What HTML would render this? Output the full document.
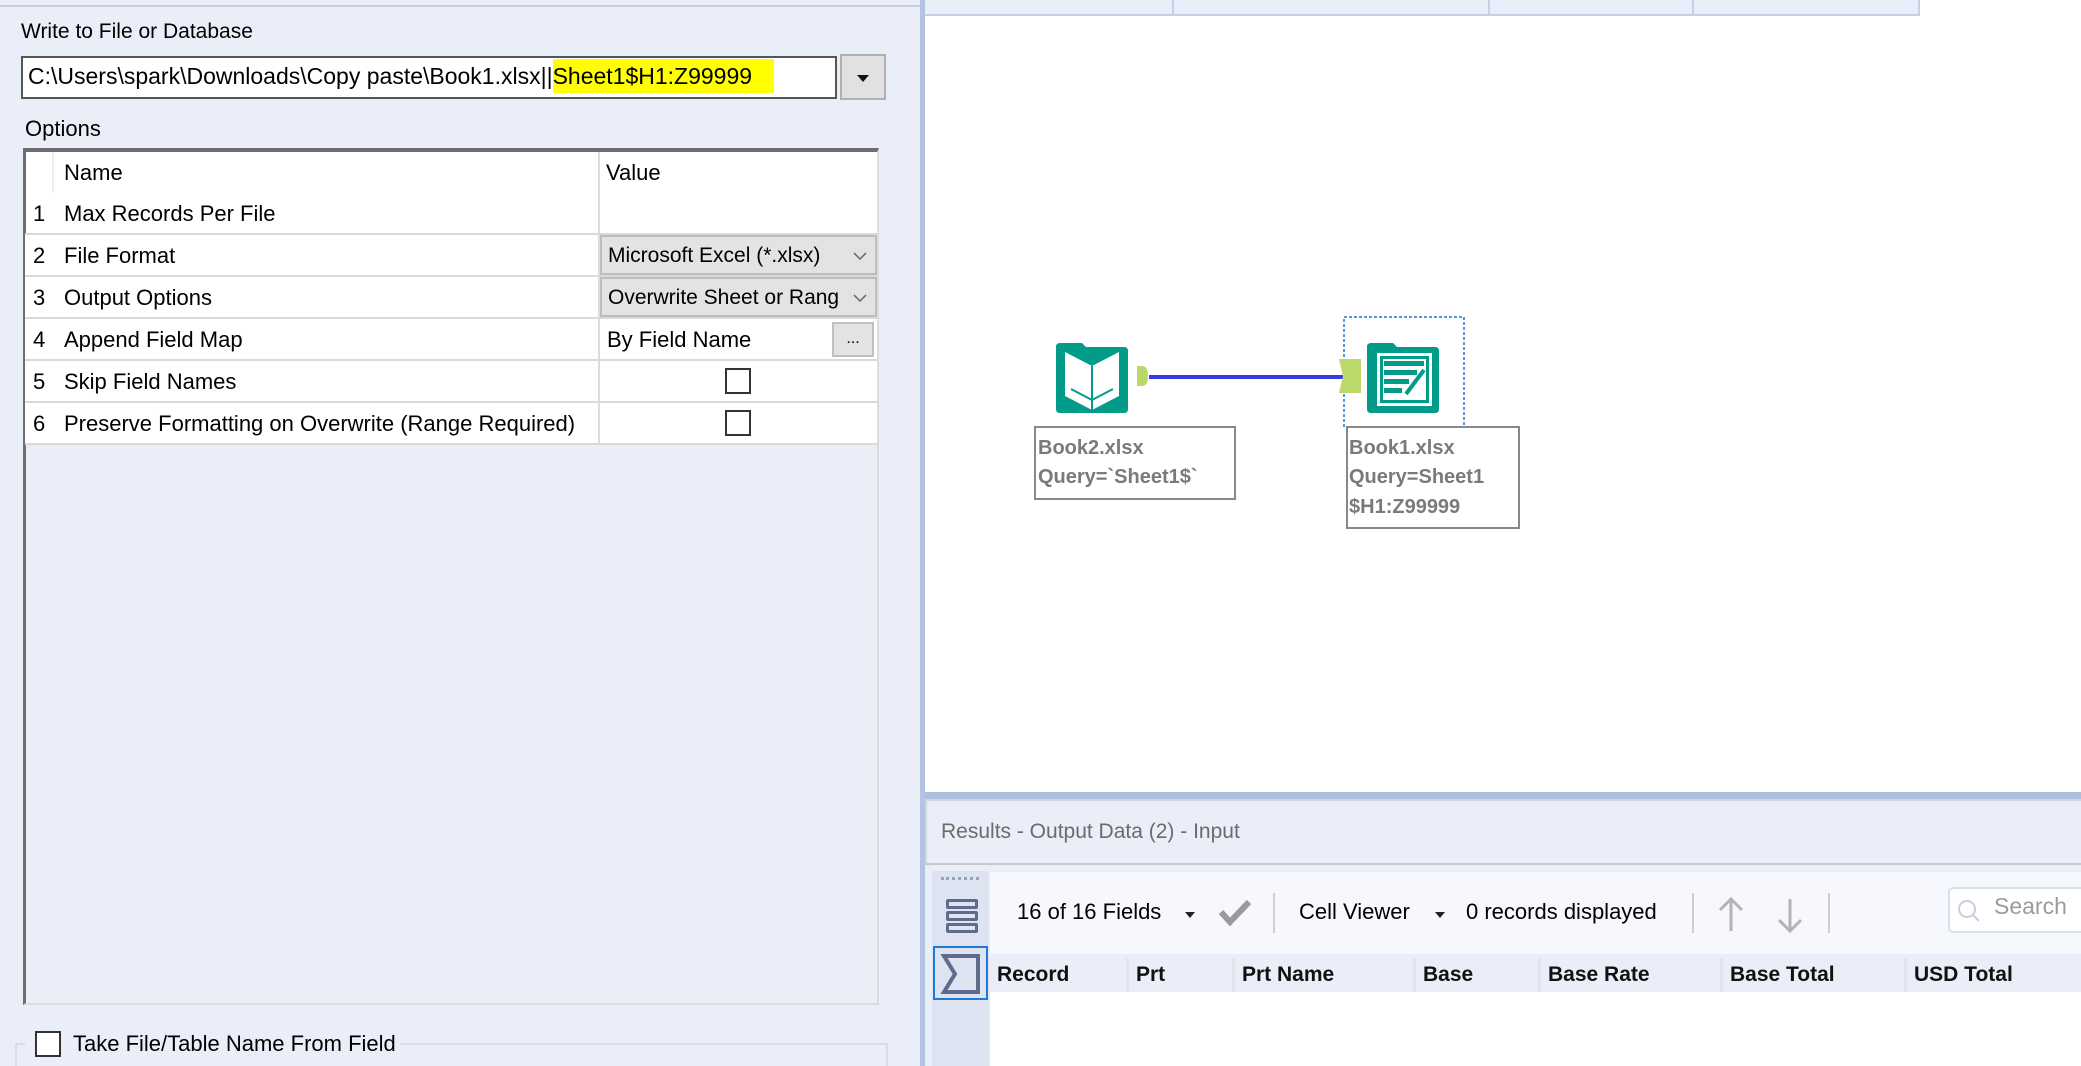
<!DOCTYPE html>
<html><head><meta charset="utf-8"><style>
*{margin:0;padding:0;box-sizing:border-box}
html,body{width:2081px;height:1066px;overflow:hidden}
body{position:relative;background:#fff;font-family:"Liberation Sans",Arial,sans-serif;color:#000}
.a{position:absolute}
.t{position:absolute;font-size:22px;line-height:26px;white-space:nowrap}
.row{position:absolute;left:25px;width:852px;height:42px;border-bottom:2px solid #d9d9d9;background:#fff}
.num{position:absolute;left:8px;top:8px;font-size:22px}
.nm{position:absolute;left:39px;top:8px;font-size:22px;white-space:nowrap}
.vc{position:absolute;left:573px;top:0;width:2px;height:42px;background:#dcdcdc}
.dd{position:absolute;left:575px;top:0;width:277px;height:40px;background:#e3e3e3;border:2px solid #bdbdbd}
.cb{position:absolute;width:26px;height:26px;border:2px solid #333;background:#fff}
.ch{position:absolute;top:958px;height:34px;background:#e9eef8;border-right:3px solid #dfe4ee;font-weight:bold;font-size:21px;line-height:34px;padding-left:7px;color:#111}
</style></head><body>
<div class="a" style="left:0;top:0;width:920px;height:1066px;background:#eaeef8"></div>
<div class="a" style="left:0;top:5px;width:920px;height:2px;background:#c9cfda"></div>
<div class="t" style="left:21px;top:19px;font-size:21px">Write to File or Database</div>
<div class="a" style="left:21px;top:56px;width:816px;height:43px;background:#fff;border:2px solid #555"></div>
<div class="t" style="left:28px;top:63px;font-size:23px">C:\Users\spark\Downloads\Copy paste\Book1.xlsx||<span style="background:#ffff00;padding:4px 22px 4px 0">Sheet1$H1:Z99999</span></div>
<div class="a" style="left:840px;top:54px;width:46px;height:46px;background:#e1e1e1;border:2px solid #b0b0b0"></div>
<div class="a" style="left:857px;top:75px;width:0;height:0;border-left:6px solid transparent;border-right:6px solid transparent;border-top:7px solid #111"></div>
<div class="t" style="left:25px;top:116px">Options</div>
<div class="a" style="left:23px;top:148px;width:856px;height:857px;border:2px solid #dcdcdc;border-top:4px solid #6e6e6e;border-left:3px solid #6e6e6e;background:#eaeef8"></div>
<div class="a" style="left:26px;top:152px;width:851px;height:82px;background:#fff"></div>
<div class="a" style="left:52px;top:152px;width:2px;height:41px;background:#eeeeee"></div>
<div class="a" style="left:598px;top:152px;width:2px;height:82px;background:#dcdcdc"></div>
<div class="t" style="left:64px;top:160px">Name</div>
<div class="t" style="left:606px;top:160px">Value</div>
<div class="row" style="top:193px;background:transparent"><span class="num">1</span><span class="nm">Max Records Per File</span></div>
<div class="row" style="top:235px"><span class="num">2</span><span class="nm">File Format</span><div class="vc"></div><div class="dd"><span class="t" style="left:6px;top:6px;font-size:21px">Microsoft Excel (*.xlsx)</span><svg class="a" style="left:251px;top:14px" width="14" height="10"><path d="M1 2l6 6 6-6" fill="none" stroke="#666" stroke-width="1.5"/></svg></div></div>
<div class="row" style="top:277px"><span class="num">3</span><span class="nm">Output Options</span><div class="vc"></div><div class="dd"><span class="t" style="left:6px;top:6px;font-size:21px">Overwrite Sheet or Rang</span><svg class="a" style="left:251px;top:14px" width="14" height="10"><path d="M1 2l6 6 6-6" fill="none" stroke="#666" stroke-width="1.5"/></svg></div></div>
<div class="row" style="top:319px"><span class="num">4</span><span class="nm">Append Field Map</span><div class="vc"></div><span class="t" style="left:582px;top:8px">By Field Name</span><div class="a" style="left:807px;top:3px;width:42px;height:35px;background:#e3e3e3;border:2px solid #c0c0c0;font-size:16px;text-align:center;line-height:30px">...</div></div>
<div class="row" style="top:361px"><span class="num">5</span><span class="nm">Skip Field Names</span><div class="vc"></div><div class="cb" style="left:700px;top:7px"></div></div>
<div class="row" style="top:403px"><span class="num">6</span><span class="nm">Preserve Formatting on Overwrite (Range Required)</span><div class="vc"></div><div class="cb" style="left:700px;top:7px"></div></div>
<div class="a" style="left:15px;top:1043px;width:873px;height:40px;border:2px solid #d8dce4"></div>
<div class="a" style="left:25px;top:1030px;width:375px;height:30px;background:#eaeef8"></div>
<div class="cb" style="left:35px;top:1031px"></div>
<div class="t" style="left:73px;top:1031px">Take File/Table Name From Field</div>
<div class="a" style="left:920px;top:0;width:5px;height:1066px;background:#b4c4e0"></div>
<div class="a" style="left:925px;top:0;width:995px;height:16px;background:#e9eef8;border-bottom:2px solid #c5d0e6;border-right:2px solid #c5d0e6"></div>
<div class="a" style="left:1172px;top:0;width:2px;height:16px;background:#c5d0e6"></div>
<div class="a" style="left:1488px;top:0;width:2px;height:16px;background:#c5d0e6"></div>
<div class="a" style="left:1692px;top:0;width:2px;height:16px;background:#c5d0e6"></div>
<svg class="a" style="left:1020px;top:310px" width="520" height="230" viewBox="1020 310 520 230">
 <line x1="1149" y1="377" x2="1345" y2="377" stroke="#3b3be6" stroke-width="4"/>
 <rect x="1344" y="317" width="120" height="110" fill="none" stroke="#1a73d9" stroke-width="1.5" stroke-dasharray="3,2"/>
 <path d="M1060 343h22l4 4h38q4 0 4 4v58q0 4-4 4h-64q-4 0-4-4v-62q0-4 4-4z" fill="#009b89"/>
 <path d="M1065 352l27 14 27-14v44l-27 14-27-14z" fill="#fff"/>
 <path d="M1092 366v44" stroke="#009b89" stroke-width="2"/>
 <path d="M1071 389l21 11 21-11" fill="none" stroke="#009b89" stroke-width="2"/>
 <path d="M1137 366h5q6 0 6 10q0 10-6 10h-5z" fill="#bbd96a"/>
 <path d="M1339 359h22v34h-22l4-17z" fill="#bbd96a"/>
 <path d="M1371 343h22l4 4h38q4 0 4 4v58q0 4-4 4h-64q-4 0-4-4v-62q0-4 4-4z" fill="#009b89"/>
 <rect x="1377" y="353" width="55" height="53" fill="#fff"/>
 <rect x="1380" y="356" width="49" height="47" fill="#009b89"/>
 <rect x="1383" y="359" width="43" height="41" fill="#fff"/>
 <g fill="#009b89"><rect x="1384" y="361" width="40" height="5"/><rect x="1384" y="370" width="33" height="5"/><rect x="1384" y="379" width="25" height="5"/><rect x="1384" y="388" width="18" height="5"/></g>
 <path d="M1424 370l-18 24" stroke="#009b89" stroke-width="4"/>
 <rect x="1035" y="427" width="200" height="72" fill="#fff" stroke="#888" stroke-width="2"/>
 <rect x="1347" y="427" width="172" height="101" fill="#fff" stroke="#888" stroke-width="2"/>
 <g font-family="Liberation Sans,Arial,sans-serif" font-size="20" font-weight="bold" fill="#7a7a7a">
  <text x="1038" y="454">Book2.xlsx</text><text x="1038" y="483">Query=`Sheet1$`</text>
  <text x="1349" y="454">Book1.xlsx</text><text x="1349" y="483">Query=Sheet1</text><text x="1349" y="513">$H1:Z99999</text>
 </g>
</svg>
<div class="a" style="left:925px;top:792px;width:1156px;height:7px;background:#aebfde"></div>
<div class="a" style="left:925px;top:799px;width:1156px;height:66px;background:#e9eef8;border-top:2px solid #cfd5df;border-bottom:2px solid #c8c8c8;border-left:2px solid #cfd5df"></div>
<div class="t" style="left:941px;top:819px;color:#6b6b6b;font-size:21px">Results - Output Data (2) - Input</div>
<div class="a" style="left:925px;top:865px;width:1156px;height:201px;background:#e9eef8"></div>
<div class="a" style="left:932px;top:871px;width:57px;height:195px;background:#dde3f0"></div>
<div class="a" style="left:941px;top:877px;width:38px;height:4px;border-top:3px dotted #9aa3b5"></div>
<div class="a" style="left:946px;top:899px;width:32px;height:10px;border:3px solid #5e6b8b;border-radius:2px"></div>
<div class="a" style="left:946px;top:911px;width:32px;height:10px;border:3px solid #5e6b8b;border-radius:2px"></div>
<div class="a" style="left:946px;top:923px;width:32px;height:10px;border:3px solid #5e6b8b;border-radius:2px"></div>
<div class="a" style="left:933px;top:946px;width:55px;height:54px;border:2px solid #1e7ad4;background:#dde3f0"></div>
<svg class="a" style="left:940px;top:953px" width="42" height="42"><path d="M4 3h34v36H4l11-18z" fill="none" stroke="#5e6b8b" stroke-width="4"/></svg>
<div class="a" style="left:990px;top:872px;width:1091px;height:82px;background:#f6f8fd"></div>
<div class="t" style="left:1017px;top:899px;font-size:22px">16 of 16 Fields</div>
<div class="a" style="left:1185px;top:912px;border-left:5px solid transparent;border-right:5px solid transparent;border-top:6px solid #222"></div>
<svg class="a" style="left:1218px;top:898px" width="34" height="28"><path d="M3 14l9 10L31 4" fill="none" stroke="#9a9a9a" stroke-width="6"/></svg>
<div class="a" style="left:1273px;top:893px;width:2px;height:40px;background:#cfcfcf"></div>
<div class="t" style="left:1299px;top:899px;font-size:22px">Cell Viewer</div>
<div class="a" style="left:1435px;top:912px;border-left:5px solid transparent;border-right:5px solid transparent;border-top:6px solid #222"></div>
<div class="t" style="left:1466px;top:899px;font-size:22px">0 records displayed</div>
<div class="a" style="left:1692px;top:893px;width:2px;height:40px;background:#cfcfcf"></div>
<svg class="a" style="left:1715px;top:895px" width="90" height="40"><path d="M16 36V4M5 15L16 4l11 11M75 4v32M64 25l11 11 11-11" fill="none" stroke="#b3b3b3" stroke-width="3"/></svg>
<div class="a" style="left:1828px;top:893px;width:2px;height:40px;background:#cfcfcf"></div>
<div class="a" style="left:1948px;top:887px;width:140px;height:46px;background:#fff;border:2px solid #d7e0ee;border-radius:5px"></div>
<svg class="a" style="left:1955px;top:897px" width="28" height="28"><circle cx="12" cy="12" r="8" fill="none" stroke="#c5cfe0" stroke-width="2"/><path d="M18 18l6 6" stroke="#c5cfe0" stroke-width="2"/></svg>
<div class="t" style="left:1994px;top:893px;color:#9a9a9a;font-size:23px">Search</div>
<div class="a" style="left:990px;top:992px;width:1091px;height:74px;background:#fff"></div>
<div class="ch" style="left:990px;width:139px">Record</div>
<div class="ch" style="left:1129px;width:106px">Prt</div>
<div class="ch" style="left:1235px;width:181px">Prt Name</div>
<div class="ch" style="left:1416px;width:125px">Base</div>
<div class="ch" style="left:1541px;width:182px">Base Rate</div>
<div class="ch" style="left:1723px;width:184px">Base Total</div>
<div class="ch" style="left:1907px;width:180px">USD Total</div>
</body></html>
